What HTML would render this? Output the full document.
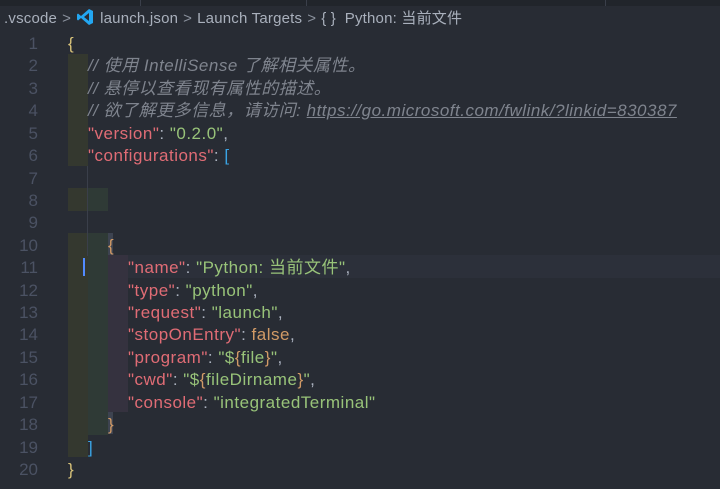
<!DOCTYPE html>
<html><head><meta charset="utf-8"><style>
body{margin:0;width:720px;height:489px;background:#282c34;overflow:hidden;font-family:"Liberation Sans","Noto Sans CJK SC",sans-serif;position:relative}
.top{position:absolute;left:0;top:0;width:720px;height:6px;background:#21252b}
.top i{position:absolute;top:0;width:1px;height:6px;background:#3a3f4a}
.bc{position:absolute;top:8px;left:4px;font-size:15px;color:#a9b0bc;white-space:nowrap;line-height:22px;letter-spacing:0.2px}
.bc .s{color:#8a919d;margin:0 5px}
.ln{position:absolute;left:0;width:38px;text-align:right;font-size:17px;color:#4b5263;line-height:22px;height:22px}
.code{position:absolute;left:68px;font-size:17px;white-space:pre;color:#abb2bf;line-height:22px;height:22px;letter-spacing:0.5px}
.b{position:absolute}
.k{color:#e06c75}.st{color:#98c379}.c{color:#7f848e;font-style:italic}.o{color:#d19a66}.y{color:#d8c37a}.bl{color:#3aa3e3}
</style></head><body>
<div class="top"><i style="left:140px"></i><i style="left:306px"></i><i style="left:605px"></i></div>
<div class="bc">.vscode<span class="s">&gt;</span><svg width="18" height="18" viewBox="0 0 18 18" style="vertical-align:-3px;margin-right:6px"><path d="M13 1 L17 3 V15 L13 17 L5 10 L2 12.5 L1 11.5 V6.5 L2 5.5 L5 8 Z M13 5 L8 9 L13 13 Z" fill="#23a7f2" fill-rule="evenodd"/></svg>launch.json<span class="s">&gt;</span>Launch Targets<span class="s">&gt;</span>{ }&nbsp; Python: 当前文件</div>
<div class="b" style="left:68px;top:54px;width:20px;height:112px;background:#34382f"></div>
<div class="b" style="left:68px;top:188px;width:20px;height:23px;background:#34382f"></div>
<div class="b" style="left:88px;top:188px;width:20px;height:23px;background:#2f3a36"></div>
<div class="b" style="left:68px;top:233px;width:20px;height:224px;background:#34382f"></div>
<div class="b" style="left:88px;top:233px;width:20px;height:202px;background:#2f3a36"></div>
<div class="b" style="left:108px;top:255px;width:20px;height:157px;background:#35323f"></div>
<div class="b" style="left:128px;top:255px;width:592px;height:23px;background:#2c303a"></div>
<div class="b" style="left:108px;top:233px;width:5px;height:22px;background:#3d4350"></div>
<div class="b" style="left:108px;top:412px;width:5px;height:22px;background:#3d4350"></div>
<div class="b" style="left:87px;top:166px;width:1px;height:90px;background:#3a3f4a"></div>
<div class="b" style="left:83px;top:258px;width:2px;height:18px;background:#528bff"></div>
<div id="L"></div>
<script>
var lines=[
'<span class="y">{</span>',
'    <span class="c">// 使用 IntelliSense 了解相关属性。</span>',
'    <span class="c">// 悬停以查看现有属性的描述。</span>',
'    <span class="c">// 欲了解更多信息，请访问: <u>https://go.microsoft.com/fwlink/?linkid=830387</u></span>',
'    <span class="k">"version"</span>: <span class="st">"0.2.0"</span>,',
'    <span class="k">"configurations"</span>: <span class="bl">[</span>',
'','','',
'        <span class="o">{</span>',
'            <span class="k">"name"</span>: <span class="st">"Python: 当前文件"</span>,',
'            <span class="k">"type"</span>: <span class="st">"python"</span>,',
'            <span class="k">"request"</span>: <span class="st">"launch"</span>,',
'            <span class="k">"stopOnEntry"</span>: <span class="o">false</span>,',
'            <span class="k">"program"</span>: <span class="st">"$<span class="o">{</span>file<span class="o">}</span>"</span>,',
'            <span class="k">"cwd"</span>: <span class="st">"$<span class="o">{</span>fileDirname<span class="o">}</span>"</span>,',
'            <span class="k">"console"</span>: <span class="st">"integratedTerminal"</span>',
'        <span class="o">}</span>',
'    <span class="bl">]</span>',
'<span class="y">}</span>'];
var h='';
for(var i=0;i<20;i++){var t=33+i*22.42;
h+='<div class="ln" style="top:'+t+'px">'+(i+1)+'</div>';
var s=lines[i];var m=s.match(/^ */)[0].length;
h+='<div class="code" style="top:'+t+'px;left:'+(68+m*5)+'px">'+s.slice(m)+'</div>';}
document.getElementById('L').innerHTML=h;
</script>
</body></html>
